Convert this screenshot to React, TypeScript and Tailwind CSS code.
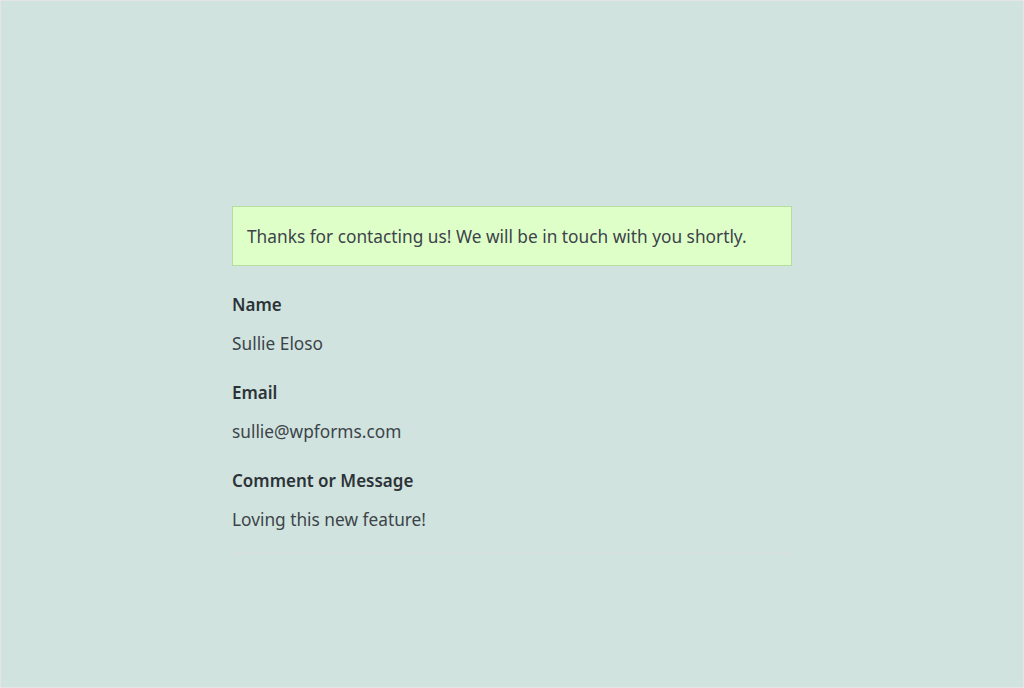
export default function App() {
  const fields = [
    { label: "Name", value: "Sullie Eloso" },
    { label: "Email", value: "sullie@wpforms.com" },
    { label: "Comment or Message", value: "Loving this new feature!" },
  ];

  return (
    <div
      className="w-[1024px] h-[688px] bg-[#d1e3de] border border-[#e3e6e5] text-[#3c434a]"
      style={{ fontFamily: '"Noto Sans", "Open Sans", sans-serif' }}
    >
      <div className="w-[560px] ml-[231px] pt-[205px]">
        <div className="h-[60px] flex items-center px-[14px] pt-[2px] bg-[#dfffc9] border border-[#b6dc9e] text-[17.3px]">
          Thanks for contacting us! We will be in touch with you shortly.
        </div>
        <div className="mt-[27px] flex flex-col gap-[25px]">
          {fields.map((f) => (
            <div key={f.label} className="flex flex-col gap-[15px]">
              <p className="text-[17px] font-semibold text-[#2c3338] leading-[24px]">
                {f.label}
              </p>
              <p className="text-[17.3px] leading-[24px]">{f.value}</p>
            </div>
          ))}
        </div>
        <div className="mt-[21px] h-px bg-[#dcdcdc]" />
      </div>
    </div>
  );
}
